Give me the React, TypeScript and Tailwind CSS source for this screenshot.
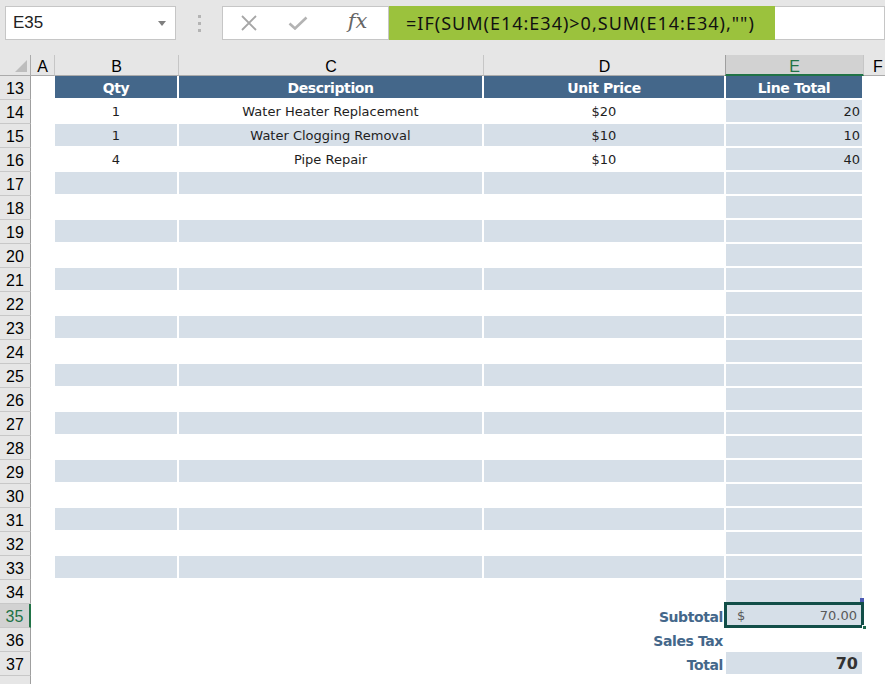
import React from "react";

const rowNums = Array.from({ length: 25 }, (_, i) => 13 + i);
const FONT = { fontFamily: '"DejaVu Sans", "Liberation Sans", sans-serif' };
const HFONT = { fontFamily: '"Liberation Sans", Arial, sans-serif' };

type Cell = { fill: boolean; text?: string; align?: "left" | "center" | "right"; bold?: boolean };

function cellsFor(r: number): Cell[] {
  const data: Record<number, [string, string, string, string]> = {
    14: ["1", "Water Heater Replacement", "$20", "20"],
    15: ["1", "Water Clogging Removal", "$10", "10"],
    16: ["4", "Pipe Repair", "$10", "40"],
  };
  if (r <= 33) {
    const odd = r % 2 === 1;
    const d = data[r];
    return [
      { fill: odd, text: d?.[0], align: "center" },
      { fill: odd, text: d?.[1], align: "center" },
      { fill: odd, text: d?.[2], align: "center" },
      { fill: true, text: d?.[3], align: "right" },
    ];
  }
  return [];
}

function DataCell({ c }: { c: Cell }) {
  const al = c.align === "right" ? "justify-end pr-[2px]" : c.align === "center" ? "justify-center" : "justify-start";
  return (
    <div className={`h-[24px] border-r-2 border-b-2 border-white bg-clip-padding flex items-center pt-[2px] ${al} text-[13px] text-[#1e1e1e] ${c.fill ? "bg-[#d6dfe8]" : "bg-white"}`} style={FONT}>
      {c.text}
    </div>
  );
}

export default function App() {
  return (
    <div className="w-[885px] h-[684px] overflow-hidden bg-[#e6e6e6] flex flex-col">
      {/* formula toolbar */}
      <div className="h-[55px] flex items-start pt-[6px] shrink-0">
        <div className="ml-[5px] w-[171px] h-[34px] bg-white border border-[#c6c6c6] flex items-center pl-[7px] pr-[9px] justify-between">
          <span className="text-[17px] text-[#222]" style={HFONT}>E35</span>
          <svg width="8" height="5" viewBox="0 0 8 5"><path d="M0 0h8L4 5z" fill="#7f7f7f" /></svg>
        </div>
        <div className="w-[46px] h-[34px] flex flex-col items-center justify-center gap-[4px]">
          <div className="w-[3px] h-[3px] bg-[#b4b4b4]" />
          <div className="w-[3px] h-[3px] bg-[#b4b4b4]" />
          <div className="w-[3px] h-[3px] bg-[#b4b4b4]" />
        </div>
        <div className="w-[167px] h-[34px] bg-white border border-[#c6c6c6] flex items-center">
          <div className="w-[52px] flex justify-center">
            <svg width="18" height="18" viewBox="0 0 18 18"><path d="M2 2L16 16M16 2L2 16" stroke="#a6a6a6" strokeWidth="1.8" /></svg>
          </div>
          <div className="w-[46px] flex justify-center">
            <svg width="20" height="14" viewBox="0 0 20 14"><path d="M1.5 7.5L7 12.5L18.5 1.5" stroke="#b3b3b3" strokeWidth="2.6" fill="none" /></svg>
          </div>
          <div className="flex-1 flex justify-center pl-[6px] pb-[2px]">
            <span className="text-[21px] italic text-[#666]" style={{ fontFamily: '"DejaVu Serif", "Liberation Serif", serif' }}>fx</span>
          </div>
        </div>
        <div className="w-[386px] h-[34px] bg-[#9bc23d] flex items-center pl-[17px]">
          <span className="text-[18px] text-[#111] whitespace-nowrap tracking-[1px]" style={{ fontFamily: '"Noto Sans", "Open Sans", sans-serif' }}>=IF(SUM(E14:E34)&gt;0,SUM(E14:E34),"")</span>
        </div>
        <div className="flex-1 h-[34px] bg-white border border-[#c6c6c6] border-l-0" />
      </div>

      {/* sheet */}
      <div className="flex-1 grid grid-cols-[31px_24px_124px_305px_242px_138px_1fr] grid-rows-[21px] auto-rows-[24px] bg-white">
        {/* column headers */}
        <div className="bg-[#e6e6e6] border-r border-b border-[#ababab] relative">
          <svg className="absolute right-[3px] bottom-[3px]" width="12" height="12" viewBox="0 0 12 12"><path d="M12 0V12H0z" fill="#bdbdbd" /></svg>
        </div>
        {["A", "B", "C", "D"].map((l) => (
          <div key={l} className="bg-[#e6e6e6] border-r border-[#c6c6c6] border-b border-b-[#ababab] flex items-center justify-center text-[16px] text-black pt-[4px]" style={HFONT}>{l}</div>
        ))}
        <div className="bg-[#d2d2d2] border-l border-l-[#9f9f9f] -ml-px border-r border-r-[#c6c6c6] border-b-2 border-b-[#217346] flex items-center justify-center text-[16px] text-[#217346] pt-[5px]" style={HFONT}>E</div>
        <div className="bg-[#e6e6e6] border-b border-[#ababab] flex items-center pl-[9px] text-[16px] text-black pt-[4px]" style={HFONT}>F</div>

        {rowNums.map((r) => {
          const sel = r === 35;
          const rowHeader = (
            <div key={`h${r}`} className={`border-b border-[#c8c8c8] flex items-center justify-center pt-[3px] text-[16px] ${sel ? "bg-[#d2d2d2] text-[#217346] border-r-2 border-r-[#217346]" : "bg-[#e6e6e6] text-black border-r border-r-[#9f9f9f]"}`} style={HFONT}>{r}</div>
          );
          const colA = <div key={`a${r}`} className="bg-white" />;
          const colF = <div key={`f${r}`} className="bg-white" />;
          let mid: React.ReactNode[] = [];
          if (r === 13) {
            mid = ["Qty", "Description", "Unit Price", "Line Total"].map((t) => (
              <div key={t} className="h-[24px] border-r-2 border-b-2 border-white bg-clip-padding bg-[#44678a] flex items-center justify-center pt-[2px] text-white font-bold text-[14px] tracking-[-0.4px]" style={FONT}>{t}</div>
            ));
          } else if (r <= 33) {
            mid = cellsFor(r).map((c, i) => <DataCell key={i} c={c} />);
          } else if (r === 34) {
            mid = [
              <div key="b" />, <div key="c" />, <div key="d" />,
              <DataCell key="e" c={{ fill: true }} />,
            ];
          } else {
            const label = r === 35 ? "Subtotal" : r === 36 ? "Sales Tax" : "Total";
            let e: React.ReactNode;
            if (r === 35) {
              e = (
                <div key="e" className="relative h-[24px] border-r-2 border-b-2 border-white bg-clip-padding bg-[#d6dfe8] flex items-center justify-between pt-[2px] pl-[11px] pr-[5px] text-[13px] text-[#595959]" style={FONT}>
                  <span>$</span><span>70.00</span>
                  <div className="absolute left-[-2px] right-[-2px] top-[-2px] bottom-[-2px] border-[3px] border-[#124e48]" />
                  <div className="absolute right-[-5px] bottom-[-4px] w-[5px] h-[5px] bg-[#1f6a4e] border border-white" />
                  <div className="absolute right-[-2px] top-[-6px] w-[4px] h-[4px] bg-[#4d5ab4]" />
                </div>
              );
            } else if (r === 36) {
              e = <div key="e" />;
            } else {
              e = (
                <div key="e" className="h-[24px] border-r-2 border-b-2 border-white bg-clip-padding bg-[#d6dfe8] flex items-center justify-end pt-[2px] pr-[4px] text-[16px] font-bold text-[#333]" style={FONT}>70</div>
              );
            }
            mid = [
              <div key="b" />, <div key="c" />,
              <div key="d" className="h-[24px] pt-[2px] flex items-center justify-end pr-[3px] text-[14px] font-bold text-[#44678a] tracking-[-0.4px]" style={FONT}>{label}</div>,
              e,
            ];
          }
          return (
            <React.Fragment key={r}>
              {rowHeader}
              {colA}
              {mid}
              {colF}
            </React.Fragment>
          );
        })}
        <div className="bg-[#e6e6e6] border-r border-[#9f9f9f]" />
      </div>
    </div>
  );
}
